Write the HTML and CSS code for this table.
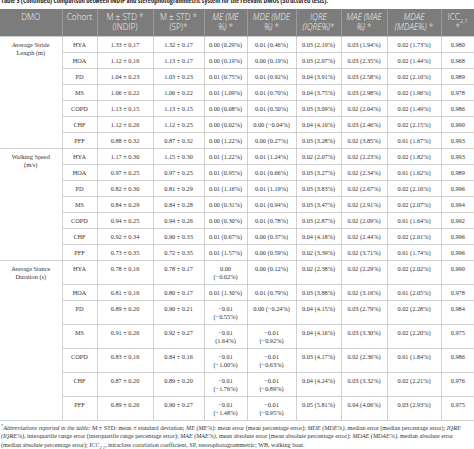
FILE: index.html
```html
<!DOCTYPE html>
<html>
<head>
<meta charset="utf-8">
<link rel="stylesheet" href="styles.css">
</head>
<body>
<div class="title">Table 3 (Continued) Comparison between INDIP and stereophotogrammetric system for the relevant DMOs (Structured tests).</div>
<table class="data">
<colgroup>
<col class="c-dmo"><col class="c-coh"><col class="c-indip"><col class="c-sp"><col class="c-me"><col class="c-mde"><col class="c-iqre"><col class="c-mae"><col class="c-mdae"><col class="c-icc">
</colgroup>
<thead>
<tr>
<th>DMO</th><th>Cohort</th><th>M ± STD *<br>(INDIP)</th><th>M ± STD *<br>(SP)*</th><th><i>ME (ME<br>%)</i> *</th><th><i>MDE (MDE<br>%)</i> *</th><th><i>IQRE<br>(IQRE%)</i>*</th><th><i>MAE (MAE<br>%)</i> *</th><th><i>MDAE<br>(MDAE%)</i> *</th><th>ICC<sub>2,1</sub><br>*</th>
</tr>
</thead>
<tbody>
<tr><td rowspan="7" class="dmo">Average Stride<br>Length (m)</td><td>HYA</td><td>1.33 ± 0.17</td><td>1.32 ± 0.17</td><td>0.00 (0.29%)</td><td>0.01 (0.46%)</td><td>0.03 (2.19%)</td><td>0.03 (1.94%)</td><td>0.02 (1.73%)</td><td>0.980</td></tr>
<tr><td>HOA</td><td>1.12 ± 0.16</td><td>1.13 ± 0.17</td><td>0.00 (0.19%)</td><td>0.00 (0.19%)</td><td>0.03 (2.97%)</td><td>0.03 (2.35%)</td><td>0.02 (1.44%)</td><td>0.968</td></tr>
<tr><td>PD</td><td>1.04 ± 0.23</td><td>1.03 ± 0.23</td><td>0.01 (0.75%)</td><td>0.01 (0.92%)</td><td>0.04 (3.91%)</td><td>0.03 (2.58%)</td><td>0.02 (2.10%)</td><td>0.989</td></tr>
<tr><td>MS</td><td>1.06 ± 0.22</td><td>1.06 ± 0.22</td><td>0.01 (1.09%)</td><td>0.01 (0.70%)</td><td>0.04 (3.75%)</td><td>0.03 (2.98%)</td><td>0.02 (1.96%)</td><td>0.978</td></tr>
<tr><td>COPD</td><td>1.13 ± 0.15</td><td>1.13 ± 0.15</td><td>0.00 (0.08%)</td><td>0.01 (0.50%)</td><td>0.03 (3.09%)</td><td>0.02 (2.04%)</td><td>0.02 (1.49%)</td><td>0.986</td></tr>
<tr><td>CHF</td><td>1.12 ± 0.26</td><td>1.12 ± 0.25</td><td>0.00 (0.02%)</td><td>0.00 (<span class="n">−</span>0.04%)</td><td>0.04 (4.10%)</td><td>0.03 (2.46%)</td><td>0.02 (2.15%)</td><td>0.990</td></tr>
<tr><td>PFF</td><td>0.88 ± 0.32</td><td>0.87 ± 0.32</td><td>0.00 (1.22%)</td><td>0.00 (0.27%)</td><td>0.03 (3.28%)</td><td>0.02 (3.85%)</td><td>0.01 (1.67%)</td><td>0.993</td></tr>

<tr><td rowspan="7" class="dmo">Walking Speed<br>(m/s)</td><td>HYA</td><td>1.17 ± 0.30</td><td>1.15 ± 0.30</td><td>0.01 (1.22%)</td><td>0.01 (1.24%)</td><td>0.02 (2.07%)</td><td>0.02 (2.23%)</td><td>0.02 (1.82%)</td><td>0.993</td></tr>
<tr><td>HOA</td><td>0.97 ± 0.25</td><td>0.97 ± 0.25</td><td>0.01 (0.95%)</td><td>0.01 (0.66%)</td><td>0.03 (3.27%)</td><td>0.02 (2.34%)</td><td>0.01 (1.62%)</td><td>0.989</td></tr>
<tr><td>PD</td><td>0.82 ± 0.30</td><td>0.81 ± 0.29</td><td>0.01 (1.16%)</td><td>0.01 (1.19%)</td><td>0.03 (3.83%)</td><td>0.02 (2.67%)</td><td>0.02 (2.16%)</td><td>0.996</td></tr>
<tr><td>MS</td><td>0.84 ± 0.29</td><td>0.84 ± 0.28</td><td>0.00 (0.31%)</td><td>0.01 (0.94%)</td><td>0.03 (3.47%)</td><td>0.02 (2.91%)</td><td>0.02 (2.07%)</td><td>0.994</td></tr>
<tr><td>COPD</td><td>0.94 ± 0.25</td><td>0.94 ± 0.26</td><td>0.00 (0.30%)</td><td>0.01 (0.78%)</td><td>0.03 (2.87%)</td><td>0.02 (2.09%)</td><td>0.01 (1.64%)</td><td>0.992</td></tr>
<tr><td>CHF</td><td>0.92 ± 0.34</td><td>0.90 ± 0.33</td><td>0.01 (0.67%)</td><td>0.00 (0.37%)</td><td>0.04 (4.18%)</td><td>0.02 (2.44%)</td><td>0.02 (2.01%)</td><td>0.996</td></tr>
<tr><td>PFF</td><td>0.73 ± 0.35</td><td>0.72 ± 0.35</td><td>0.01 (1.57%)</td><td>0.00 (0.59%)</td><td>0.02 (3.39%)</td><td>0.02 (3.71%)</td><td>0.01 (1.74%)</td><td>0.996</td></tr>

<tr><td rowspan="7" class="dmo">Average Stance<br>Duration (s)</td><td>HYA</td><td>0.78 ± 0.16</td><td>0.78 ± 0.17</td><td>0.00<br>(<span class="n">−</span>0.02%)</td><td>0.00 (0.12%)</td><td>0.02 (2.38%)</td><td>0.02 (2.29%)</td><td>0.02 (2.02%)</td><td>0.990</td></tr>
<tr><td>HOA</td><td>0.81 ± 0.16</td><td>0.80 ± 0.17</td><td>0.01 (1.30%)</td><td>0.01 (0.79%)</td><td>0.03 (3.88%)</td><td>0.02 (3.16%)</td><td>0.01 (2.05%)</td><td>0.978</td></tr>
<tr><td>PD</td><td>0.89 ± 0.20</td><td>0.90 ± 0.21</td><td><span class="n">−</span>0.01<br>(<span class="n">−</span>0.55%)</td><td>0.00 (<span class="n">−</span>0.24%)</td><td>0.04 (4.15%)</td><td>0.03 (2.79%)</td><td>0.02 (2.28%)</td><td>0.984</td></tr>
<tr><td>MS</td><td>0.91 ± 0.26</td><td>0.92 ± 0.27</td><td><span class="n">−</span>0.01<br>(1.64%)</td><td><span class="n">−</span>0.01<br>(<span class="n">−</span>0.92%)</td><td>0.04 (4.16%)</td><td>0.03 (3.30%)</td><td>0.02 (2.20%)</td><td>0.975</td></tr>
<tr><td>COPD</td><td>0.83 ± 0.16</td><td>0.84 ± 0.16</td><td><span class="n">−</span>0.01<br>(<span class="n">−</span>1.00%)</td><td><span class="n">−</span>0.01<br>(<span class="n">−</span>0.63%)</td><td>0.03 (4.17%)</td><td>0.02 (2.36%)</td><td>0.01 (1.84%)</td><td>0.986</td></tr>
<tr><td>CHF</td><td>0.87 ± 0.20</td><td>0.89 ± 0.20</td><td><span class="n">−</span>0.01<br>(<span class="n">−</span>1.76%)</td><td><span class="n">−</span>0.01<br>(<span class="n">−</span>0.89%)</td><td>0.04 (4.24%)</td><td>0.03 (3.32%)</td><td>0.02 (2.21%)</td><td>0.976</td></tr>
<tr><td>PFF</td><td>0.89 ± 0.26</td><td>0.90 ± 0.27</td><td><span class="n">−</span>0.01<br>(<span class="n">−</span>1.48%)</td><td><span class="n">−</span>0.01<br>(<span class="n">−</span>0.95%)</td><td>0.05 (5.81%)</td><td>0.04 (4.06%)</td><td>0.03 (2.93%)</td><td>0.975</td></tr>
</tbody>
</table>
<p class="note"><sup>*</sup><i>Abbreviations reported in the table:</i> M ± STD: mean ± standard deviation; <i>ME (ME%)</i>: mean error (mean percentage error); <i>MDE (MDE%)</i>, median error (median percentage error); <i>IQRE (IQRE%)</i>, interquartile range error (interquartile range percentage error); <i>MAE (MAE%)</i>, mean absolute error (mean absolute percentage error); <i>MDAE (MDAE%)</i>, median absolute error (median absolute percentage error); <i>ICC<sub>2,1</sub></i>, intraclass correlation coefficient, SP, stereophotogrammetric; WB, walking bout.</p>
</body>
</html>
```
FILE: styles.css
```css
html, body {
  margin: 0;
  padding: 0;
  background: #ffffff;
}
body {
  width: 474px;
  overflow: hidden;
}
.title {
  font-family: "Open Sans", "Liberation Sans", sans-serif;
  font-weight: 700;
  font-size: 6.8px;
  font-stretch: 80%;
  line-height: 8px;
  height: 8px;
  margin-top: -3px;
  margin-bottom: 4px;
  padding-left: 1px;
  color: #2a2a2a;
  white-space: nowrap;
}
.data {
  width: 474px;
  table-layout: fixed;
  border-collapse: collapse;
  font-family: "Liberation Serif", "DejaVu Serif", serif;
  font-size: 6.3px;
  color: #333;
}
.c-dmo { width: 62px; }
.c-coh { width: 35px; }
.c-indip { width: 56px; }
.c-sp { width: 51px; }
.c-me { width: 43px; }
.c-mde { width: 49px; }
.c-iqre { width: 45px; }
.c-mae { width: 46px; }
.c-mdae { width: 54px; }
.c-icc { width: 33px; }
.data th {
  background: #7c7c7c;
  color: #f4f4f4;
  font-family: "Open Sans", "Liberation Sans", sans-serif;
  font-weight: 300;
  font-size: 8.2px;
  line-height: 10px;
  padding: 3px 1px 4px;
  text-align: center;
  vertical-align: top;
  border-left: 1px solid #9a9a9a;
  border-right: 1px solid #9a9a9a;
}
.data th:first-child { border-left: none; }
.data th:last-child { border-right: none; }
.data th sub {
  font-size: 6px;
  line-height: 0;
}
.data td {
  border: 1px solid #d0d0d0;
  padding: 3.5px 1px;
  line-height: 8px;
  height: 8px;
  text-align: center;
  vertical-align: top;
  white-space: nowrap;
}
.data td:first-child { border-left: none; }
.data td:last-child { border-right: none; }
.data td.dmo {
  white-space: normal;
}
.n {
  line-height: 0;
}
.note {
  margin: 3px 0 0;
  padding: 0 1px;
  font-family: "Liberation Serif", "DejaVu Serif", serif;
  font-size: 6.1px;
  line-height: 8.4px;
  color: #333;
}
.note sup, .note sub {
  font-size: 4.3px;
  line-height: 0;
}
```
